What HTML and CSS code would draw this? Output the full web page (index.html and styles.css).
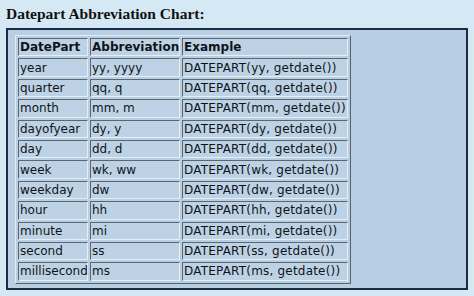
FILE: index.html
```
<!DOCTYPE html>
<html>
<head>
<meta charset="utf-8">
<link rel="stylesheet" href="styles.css">
</head>
<body>
<h1 class="title">Datepart Abbreviation Chart:</h1>
<div class="box">
<table class="chart">
<tr><th class="c1">DatePart</th><th class="c2">Abbreviation</th><th class="c3">Example</th></tr>
<tr><td>year</td><td>yy, yyyy</td><td>DATEPART(yy, getdate())</td></tr>
<tr><td>quarter</td><td>qq, q</td><td>DATEPART(qq, getdate())</td></tr>
<tr><td>month</td><td>mm, m</td><td>DATEPART(mm, getdate())</td></tr>
<tr><td>dayofyear</td><td>dy, y</td><td>DATEPART(dy, getdate())</td></tr>
<tr><td>day</td><td>dd, d</td><td>DATEPART(dd, getdate())</td></tr>
<tr><td>week</td><td>wk, ww</td><td>DATEPART(wk, getdate())</td></tr>
<tr><td>weekday</td><td>dw</td><td>DATEPART(dw, getdate())</td></tr>
<tr><td>hour</td><td>hh</td><td>DATEPART(hh, getdate())</td></tr>
<tr><td>minute</td><td>mi</td><td>DATEPART(mi, getdate())</td></tr>
<tr><td>second</td><td>ss</td><td>DATEPART(ss, getdate())</td></tr>
<tr><td>millisecond</td><td>ms</td><td>DATEPART(ms, getdate())</td></tr>
</table>
</div>
</body>
</html>
```
FILE: styles.css
```
html, body {
  margin: 0;
  padding: 0;
  background: #d5e9f5;
}
body {
  padding: 4px 0 0 6px;
}
.title {
  margin: 0;
  font-family: "Liberation Serif", serif;
  font-weight: bold;
  font-size: 15.5px;
  line-height: 20px;
  color: #111;
  height: 24px;
}
.box {
  width: 462px;
  height: 262px;
  border: 2px solid #1a2b45;
  background: #b8cee2;
  padding: 5px 7px;
  box-sizing: border-box;
}
.chart {
  table-layout: fixed;
  width: 336px;
  border-collapse: separate;
  border-spacing: 2px;
  border: 1px solid;
  border-color: #e2edf5 #56626c #56626c #e2edf5;
  font-family: "DejaVu Sans", Verdana, sans-serif;
  font-size: 12px;
  color: #101418;
}
.chart th, .chart td {
  box-sizing: border-box;
  border: 1px solid;
  border-color: #5a6670 #e6eef5 #e6eef5 #5a6670;
  padding: 0 0 0 1px;
  height: 18.4px;
  text-align: left;
  white-space: nowrap;
  background: #bdd2e5;
}
.chart td:nth-child(3) {
  letter-spacing: 0.2px;
}
.chart th {
  font-weight: bold;
}
.c1 { width: 70px; }
.c2 { width: 90px; }
.c3 { width: 166px; }
```
